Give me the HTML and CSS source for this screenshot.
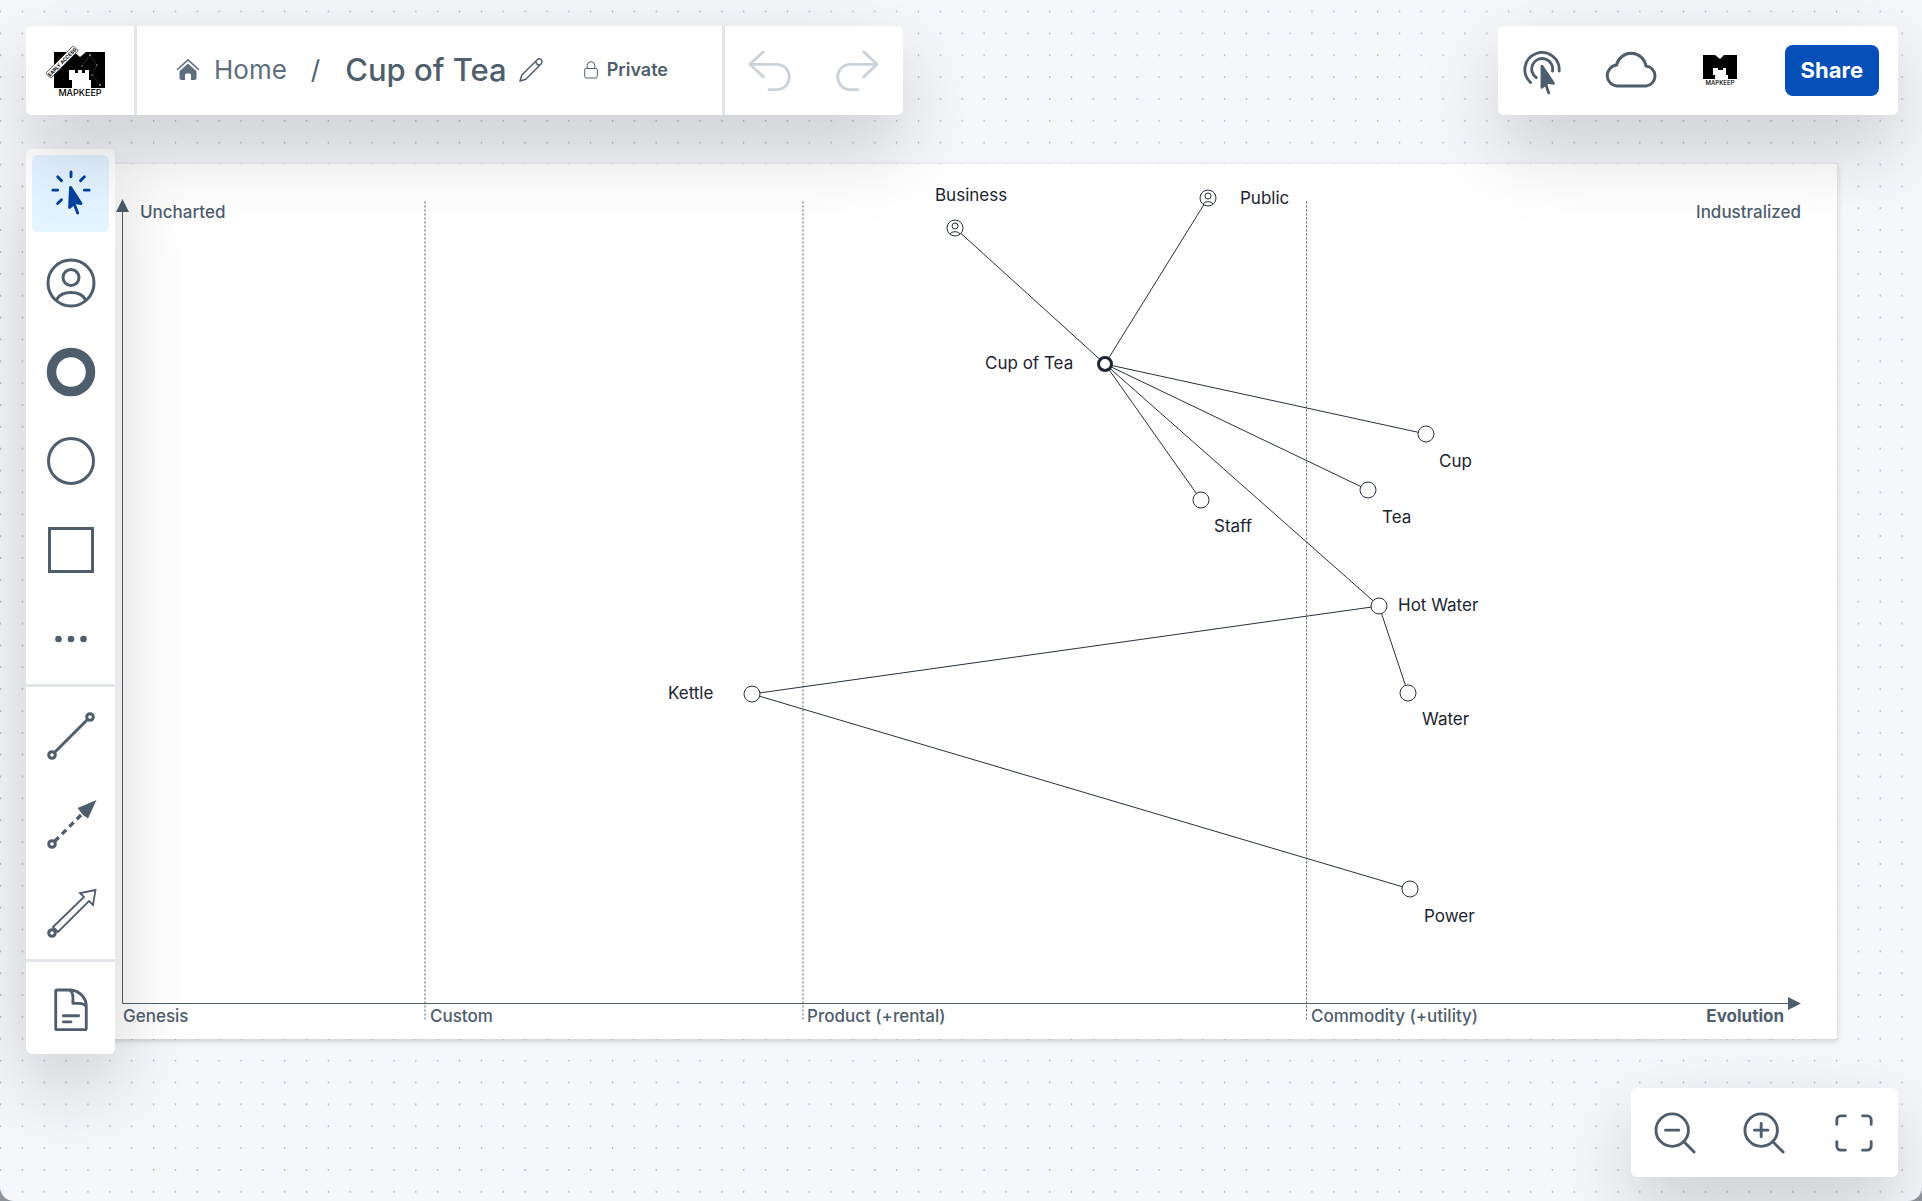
FILE: index.html
```html
<!DOCTYPE html>
<html lang="en">
<head>
    <meta charset="UTF-8">
    <meta name="viewport" content="width=device-width, initial-scale=1.0">
    <title>Cup of Tea - MapKeep</title>
    <link rel="stylesheet" href="styles.css">
</head>
<body>
    <svg class="grid-dots" aria-hidden="true">
        <pattern id="dots" width="21.857" height="21.857" y="0.6" patternUnits="userSpaceOnUse">
            <circle cx="0.6" cy="10.9" r="0.8" fill="#a0a4aa"/>
            <circle cx="22.457" cy="10.9" r="0.8" fill="#a0a4aa"/>
        </pattern>
        <rect width="100%" height="100%" fill="url(#dots)"/>
    </svg>

    <header class="topbar">
        <div class="panel">
            <a class="logo" href="#" aria-label="Mapkeep">
                <svg class="logo-image" viewBox="44 44 64 54">
                    <path d="M54 52h20l6 5 6-5h19v36H91v-8h-2V70h-4v3h-3v-3h-4v3h-3v-3h-6v10h3v8H54z"/>
                    <path d="M82 66l8-11 7 10-5 10 8 9" fill="none" stroke="#555" stroke-width="0.5"/>
                    <g fill="#fff"><circle cx="90" cy="55" r="0.8"/><circle cx="97" cy="65" r="0.6"/><circle cx="92" cy="75" r="0.6"/><circle cx="100" cy="85" r="0.8"/><circle cx="82" cy="66" r="0.6"/></g>
                    <g transform="rotate(-45 62 62)">
                        <rect x="42.500" y="58.500" width="39" height="7" rx="1.500" fill="#fff" stroke="#222" stroke-width="0.7"/>
                        <text class="logo-ribbon" x="62" y="64" text-anchor="middle">EARLY ACCESS</text>
                    </g>
                    <text class="logo-text" x="80" y="96" text-anchor="middle">MAPKEEP</text>
                </svg>
            </a>
            <nav class="breadcrumb">
                <a class="home" href="#">
                    <svg class="icon-small" viewBox="0 0 24 24" fill="currentColor">
                        <path d="M1.500 11.500L12 1.800l10.500 9.700" fill="none" stroke="currentColor" stroke-width="1.600" stroke-linecap="round"/>
                        <path d="M12 5.500l8.500 7.800V20a2 2 0 0 1-2 2H15v-5a1.500 1.500 0 0 0-1.500-1.500h-3A1.500 1.500 0 0 0 9 17v5H5.500a2 2 0 0 1-2-2v-6.700z"/>
                    </svg>
                    Home
                </a>
                <span class="slash">/</span>
                <h1>Cup of Tea</h1>
                <button class="edit" aria-label="Rename map">
                    <svg class="icon-small" viewBox="0 0 24 24" fill="none" stroke="currentColor" stroke-width="1.500" stroke-linejoin="round">
                        <path d="M1 23l1.800-6L18.300 1.800a2.700 2.700 0 0 1 3.900 3.900L6.800 21.200z"/>
                        <path d="M16.500 3.600l1.600 2.700 2.600 1.200"/>
                    </svg>
                </button>
                <button class="privacy">
                    <svg class="icon-lock" viewBox="0 0 14 18" fill="none" stroke="currentColor">
                        <rect x="0.700" y="7.500" width="12.600" height="9.500" rx="1.500"/>
                        <path d="M3.200 7.500V4.500a3.800 3.800 0 0 1 7.600 0v3"/>
                    </svg>
                    Private
                </button>
            </nav>
            <div class="history">
                <button class="cell" aria-label="Undo" disabled>
                    <svg class="icon" viewBox="0 0 44 44">
                        <path d="M16 2L2 15 16 28M2 15h28a13.200 13.200 0 0 1 0 26.500h-8"/>
                    </svg>
                </button>
                <button class="cell" aria-label="Redo" disabled>
                    <svg class="icon" viewBox="0 0 44 44">
                        <path d="M28 2l14 13-14 13M42 15H14a13.200 13.200 0 0 0 0 26.500h8"/>
                    </svg>
                </button>
            </div>
        </div>

        <div class="panel actions">
            <button class="cell" aria-label="Presentation">
                <svg class="icon" viewBox="0 1 44 44">
                    <path d="M10 35A18 18 0 1 1 40 23M16 30A11 11 0 1 1 33 23M26 37l3 9"/>
                    <path d="M22 18l12 18-6-1-6 5z" fill="currentColor"/>
                </svg>
            </button>
            <button class="cell" aria-label="Saved">
                <svg class="icon-cloud" viewBox="0 2 52 38">
                    <path d="M12 36a10.500 10.500 0 0 1-.5-20.900 15 15 0 0 1 29.500 1A10 10 0 0 1 41 36z"/>
                </svg>
            </button>
            <a class="cell" href="#" aria-label="Workspace">
                <svg class="workspace" viewBox="0 1 36 34">
                    <path d="M1 2h12l5 4 4-4h13v24H26v-4h-2v-7h-3v2h-5v-2h-5v7h2v4H1z"/>
                    <text class="workspace-text" x="18" y="32" text-anchor="middle">MAPKEEP</text>
                </svg>
            </a>
            <button class="share">Share</button>
        </div>
    </header>

    <aside class="panel toolbox">
        <div class="tools">
            <button class="cell active" aria-label="Select">
                <svg class="icon" viewBox="0 4 44 44">
                    <path d="M22 3v5M8 8l4 4M36 8l-4 4M3 22h5M36 22h5M12 32l-4 4M26 38l3 8"/>
                    <path d="M21.500 19l11 17-6-1-6 5z" fill="currentColor"/>
                </svg>
            </button>
            <button class="cell" aria-label="User">
                <svg class="icon-wide" viewBox="0 0 50 50">
                    <circle cx="25" cy="25" r="23"/>
                    <circle cx="25" cy="19.500" r="8"/>
                    <path d="M11 41a15 10 0 0 1 28 0"/>
                </svg>
            </button>
            <button class="cell" aria-label="Anchor">
                <svg class="icon-wide" viewBox="0 0 50 50"><circle cx="25" cy="25" r="19.500" stroke-width="9.500"/></svg>
            </button>
            <button class="cell" aria-label="Component">
                <svg class="icon-wide" viewBox="0 0 50 50"><circle cx="25" cy="25" r="22.500"/></svg>
            </button>
            <button class="cell" aria-label="Square">
                <svg class="icon-wide" viewBox="0 0 50 50"><rect x="3.500" y="3.500" width="43" height="43" stroke-linejoin="miter"/></svg>
            </button>
            <button class="cell" aria-label="More">
                <svg class="icon-wide" viewBox="0 0 50 50"><g fill="currentColor" stroke="none"><circle cx="12.500" cy="25" r="3.300"/><circle cx="25" cy="25" r="3.300"/><circle cx="37.500" cy="25" r="3.300"/></g></svg>
            </button>
        </div>
        <div class="tools links">
            <button class="cell" aria-label="Line">
                <svg class="icon-wide" viewBox="0 0 50 50"><path d="M8.500 41.500l33-33"/><circle cx="6" cy="44" r="3.300"/><circle cx="44" cy="6" r="3.300"/></svg>
            </button>
            <button class="cell" aria-label="Dashed arrow">
                <svg class="icon-wide" viewBox="0 0 50 50"><path d="M8.500 41.500L38 12" stroke-dasharray="6 4.500" stroke-linecap="butt" stroke-width="3.300"/><path d="M50.500 0L42 18.500 37 15 31.500 8z" fill="currentColor" stroke="none"/><circle cx="6" cy="44" r="3.300"/></svg>
            </button>
            <button class="cell" aria-label="Block arrow">
                <svg class="icon-wide" viewBox="0 0 50 50" stroke-linecap="butt"><path d="M7 38L38 8l-4-4 15.500-3L47 16l-4-4-31 31z" stroke-width="1.800" stroke-linejoin="miter"/><circle cx="6" cy="44" r="3.300"/></svg>
            </button>
        </div>
        <div class="tools notes">
            <button class="cell" aria-label="Note">
                <svg class="icon" viewBox="0 0 44 44"><path d="M7 1h15c9 1 16 8 16 17v23a1.500 1.500 0 0 1-1.500 1.500h-29A1.500 1.500 0 0 1 6 41V2.500A1.500 1.500 0 0 1 7.500 1M20 1c5 2 4 8 4 14h6c4 0 7 1 8 4M14 28h16M14 34.500h8"/></svg>
            </button>
        </div>
    </aside>

    <main>
        <svg class="map" viewBox="87 164 1750 875">
            <defs>
                <g id="user">
                    <circle r="8"/>
                    <circle cy="-2" r="3"/>
                    <path d="M-5 6a5.500 4 0 0 1 10 0"/>
                </g>
            </defs>

            <!-- axes -->
            <g class="axis">
                <path d="M122.500 212V1003.500H1788"/>
                <path class="head" d="M122.500 199l6.500 13h-13zM1801 1003.500l-13-6.500v13z"/>
                <path class="stage" d="M425 201.500V1021M803 201.500V1021M1306.500 201.500V1021"/>
            </g>
            <g class="axis-text">
                <text x="140" y="218">Uncharted</text>
                <text x="1801" y="218" text-anchor="end">Industralized</text>
                <text x="123" y="1022">Genesis</text>
                <text x="430" y="1022">Custom</text>
                <text x="807" y="1022">Product (+rental)</text>
                <text x="1311" y="1022">Commodity (+utility)</text>
                <text class="strong" x="1784" y="1022" text-anchor="end">Evolution</text>
            </g>

            <g class="edges">
                <path d="M955 228L1105 364M1208 198L1105 364M1105 364L1426 434M1105 364L1368 490M1105 364L1201 500M1105 364L1379 606M1379 606L752 694M1379 606L1408 693M752 694L1410 889"/>
            </g>

            <g class="nodes">
                <use href="#user" x="955" y="228"/>
                <use href="#user" x="1208" y="198"/>
                <circle class="anchor" cx="1105" cy="364" r="6.500"/>
                <circle cx="1426" cy="434" r="8"/>
                <circle cx="1368" cy="490" r="8"/>
                <circle cx="1201" cy="500" r="8"/>
                <circle cx="1379" cy="606" r="8"/>
                <circle cx="1408" cy="693" r="8"/>
                <circle cx="1410" cy="889" r="8"/>
                <circle cx="752" cy="694" r="8"/>
            </g>

            <g class="labels">
                <text x="935" y="201">Business</text>
                <text x="1240" y="204">Public</text>
                <text x="985" y="369">Cup of Tea</text>
                <text x="1439" y="467">Cup</text>
                <text x="1382" y="523">Tea</text>
                <text x="1214" y="532">Staff</text>
                <text x="1398" y="611">Hot Water</text>
                <text x="1422" y="725">Water</text>
                <text x="1424" y="922">Power</text>
                <text x="668" y="699">Kettle</text>
            </g>
        </svg>
    </main>

    <div class="panel zoom">
        <button class="cell" aria-label="Zoom out">
            <svg class="icon" viewBox="1 0 44 44"><circle cx="19" cy="19" r="17"/><path d="M31 31l11 11M12 19h14"/></svg>
        </button>
        <button class="cell" aria-label="Zoom in">
            <svg class="icon" viewBox="1 0 44 44"><circle cx="19" cy="19" r="17"/><path d="M31 31l11 11M12 19h14M19 12v14"/></svg>
        </button>
        <button class="cell" aria-label="Fit to screen">
            <svg class="icon" viewBox="0 0 44 44"><path d="M4 13V8a4 4 0 0 1 4-4h5M31 4h5a4 4 0 0 1 4 4v5M40 31v5a4 4 0 0 1-4 4h-5M13 40H8a4 4 0 0 1-4-4v-5"/></svg>
        </button>
    </div>
</body>
</html>
```

FILE: styles.css
```css
* {
    box-sizing: border-box;
}

html {
    height: 100%;
    background-color: #8b929c;
}

body {
    position: relative;
    min-height: 100%;
    margin: 0;
    overflow: hidden;
    border-radius: 0 0 14px 14px;
    background-color: #f5f7fb;
    color: #4f5e6c;
    font-family: Inter, "Liberation Sans", sans-serif;
}

button {
    padding: 0;
    border: none;
    background: none;
    color: inherit;
    font-family: inherit;
    cursor: pointer;
}

a {
    color: inherit;
    text-decoration: none;
}

svg {
    display: block;
}

.grid-dots {
    position: absolute;
    width: 100%;
    height: 100%;
}

.panel {
    display: flex;
    border-radius: 6px;
    background-color: #fff;
    box-shadow: 0 32px 80px rgba(0, 0, 0, 0.18);
}

.cell {
    display: flex;
    align-items: center;
    justify-content: center;
    width: 89px;
    height: 89px;
}

.icon,
.icon-wide,
.icon-cloud {
    overflow: visible;
    fill: none;
    stroke: currentColor;
    stroke-width: 3;
    stroke-linecap: round;
    stroke-linejoin: round;
}

.icon {
    width: 42px;
    height: 42px;
}

.icon-wide {
    width: 50px;
    height: 50px;
}

.icon-cloud {
    width: 52px;
    height: 38px;
}

/* top bar */
.topbar {
    position: absolute;
    z-index: 2;
    top: 0;
    left: 0;
    right: 0;
    display: flex;
    justify-content: space-between;
    padding: 26px 24px 0 26px;
    pointer-events: none;
}

.topbar .panel {
    pointer-events: auto;
}

.logo {
    display: flex;
    align-items: center;
    padding: 0 26px 0 18px;
    border-right: 3px solid #e2e5ea;
}

.logo-image {
    width: 64px;
    height: 54px;
}

.logo-text {
    font-family: Inter, sans-serif;
    font-size: 9px;
    font-weight: 500;
}

.logo-ribbon {
    font-family: Inter, sans-serif;
    font-size: 5px;
    font-weight: 700;
}

.breadcrumb {
    display: flex;
    align-items: center;
    padding: 0 54px 2px 39px;
}

.home {
    display: flex;
    align-items: center;
    gap: 14px;
    color: #5f6e7c;
    font-size: 26px;
}

.icon-small {
    width: 24px;
    height: 24px;
}

.slash {
    padding: 0 25px 0 24px;
    font-size: 26px;
}

h1 {
    margin: 0;
    font-size: 31px;
    font-weight: 500;
}

.edit {
    margin: 0 41px 0 12px;
}

.privacy {
    display: flex;
    align-items: center;
    gap: 9px;
    font-size: 18px;
    font-weight: 600;
}

.icon-lock {
    width: 14px;
    height: 18px;
}

.history {
    display: flex;
    border-left: 3px solid #e2e5ea;
    color: #cbd2da;
}

.actions {
    align-items: center;
    padding-right: 19px;
}

.workspace {
    width: 36px;
    height: 34px;
    fill: #000;
}

.workspace-text {
    font-size: 6px;
    font-weight: 500;
}

.share {
    margin-left: 20px;
    padding: 12px 16px;
    border-radius: 8px;
    background-color: #0550b8;
    color: #fff;
    font-size: 22px;
    font-weight: 700;
    line-height: 27px;
}

/* left tools */
.toolbox {
    position: absolute;
    z-index: 1;
    top: 149px;
    left: 26px;
    flex-direction: column;
}

.tools {
    padding-bottom: 1px;
}

.links {
    padding-top: 4px;
    border-top: 3px solid #e2e5ea;
}

.notes {
    padding: 3px 0 0;
    border-top: 3px solid #e2e5ea;
}

.active {
    border: 6px solid transparent;
    border-radius: 12px;
    background: #e3f3ff padding-box;
    color: #0342a0;
}

/* map */
main {
    padding: 164px 85px 162px 87px;
}

.map {
    position: relative;
    width: 100%;
    background-color: #fff;
    box-shadow: 0 2px 6px rgba(0, 0, 0, 0.18);
    font-size: 17px;
}

.axis {
    fill: none;
    stroke: #4f5e6c;
    stroke-width: 1;
}

.axis .head {
    fill: #4f5e6c;
    stroke: none;
}

.axis .stage {
    stroke-dasharray: 2 2;
}

.axis-text {
    fill: #4f5e6c;
    font-weight: 500;
}

.axis-text .strong {
    font-weight: 700;
}

.edges {
    stroke: #27303c;
    stroke-width: 1;
}

.nodes {
    fill: #fff;
    stroke: #27303c;
    stroke-width: 1;
}

.nodes .anchor {
    stroke: #1b2430;
    stroke-width: 3;
}

.labels {
    fill: #1b2430;
}

/* zoom controls */
.zoom {
    position: absolute;
    right: 24px;
    bottom: 24px;
}
```
